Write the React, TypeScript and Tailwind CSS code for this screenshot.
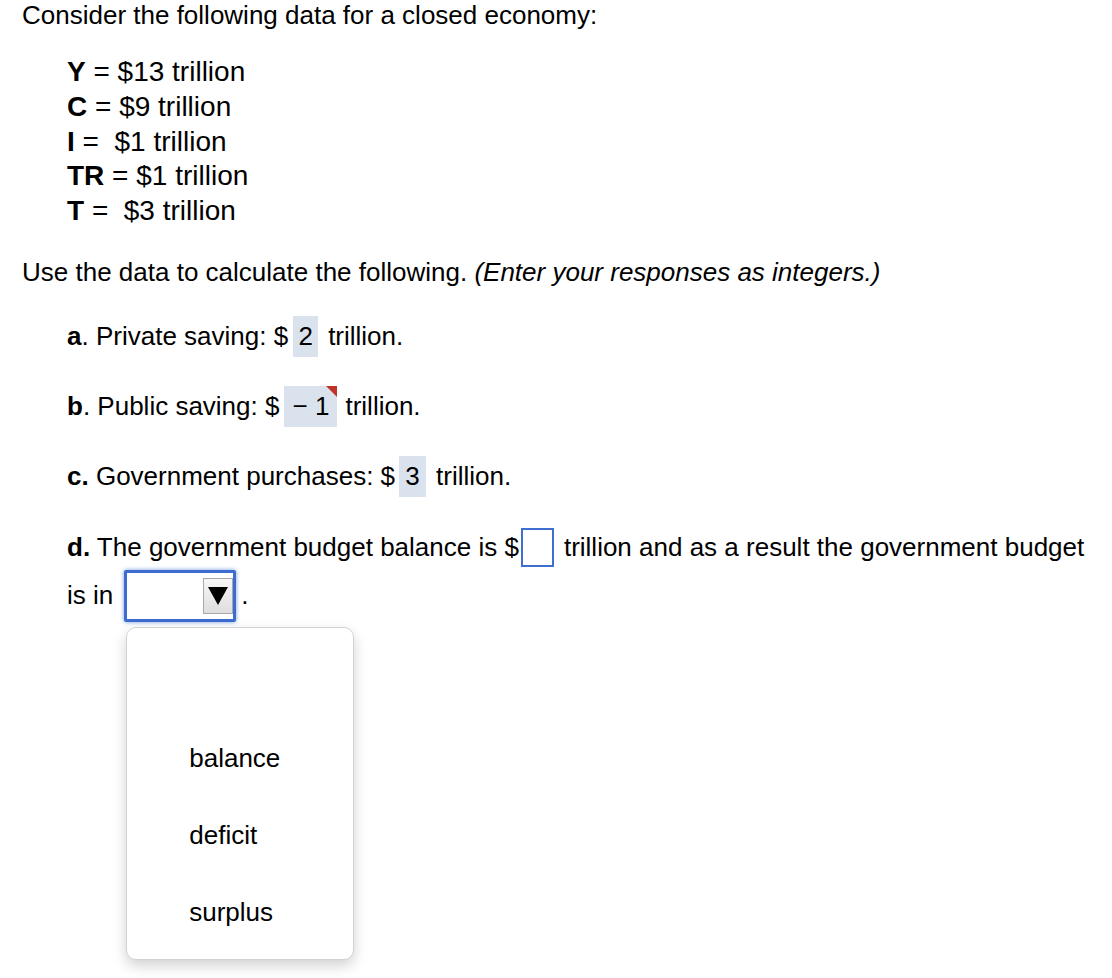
import React from "react";

function Box({ children, w, extra }: { children?: React.ReactNode; w: string; extra?: React.ReactNode }) {
  return (
    <span className={`relative flex h-[41px] items-center justify-center bg-[#dae2ee] ${w}`}>
      {children}
      {extra}
    </span>
  );
}

export default function App() {
  return (
    <div className="min-h-[978px] bg-white font-['Liberation_Sans',Arial,Helvetica,sans-serif] text-[26px] leading-[35px] text-black">
      <div className="pl-[22px]">
        <p className="leading-[31px]">Consider the following data for a closed economy:</p>

        <div className="mt-[24px] pl-[45px] text-[28px] leading-[34.75px]">
          <p>
            <b>Y</b> = $13 trillion
          </p>
          <p>
            <b>C</b> = $9 trillion
          </p>
          <p>
            <b>I</b> =&nbsp; $1 trillion
          </p>
          <p>
            <b>TR</b> = $1 trillion
          </p>
          <p>
            <b>T</b> =&nbsp; $3 trillion
          </p>
        </div>

        <p className="mt-[26px]">
          Use the data to calculate the following. <i>(Enter your responses as integers.)</i>
        </p>

        <div className="pl-[45px]">
          <div className="mt-[26px] flex h-[41px] items-center">
            <span>
              <b>a</b>. Private saving: $
            </span>
            <span className="ml-[5px]">
              <Box w="w-[25px]">2</Box>
            </span>
            <span className="ml-[10px]">trillion.</span>
          </div>

          <div className="mt-[29px] flex h-[41px] items-center">
            <span>
              <b>b</b>. Public saving: $
            </span>
            <span className="ml-[5px]">
              <Box
                w="w-[53px]"
                extra={
                  <span className="absolute right-0 top-0 h-0 w-0 border-l-[11px] border-t-[11px] border-l-transparent border-t-[#c0332b]" />
                }
              >
                <span>−&nbsp;1</span>
              </Box>
            </span>
            <span className="ml-[8px]">trillion.</span>
          </div>

          <div className="mt-[29px] flex h-[41px] items-center">
            <span>
              <b>c.</b> Government purchases: $
            </span>
            <span className="ml-[4px]">
              <Box w="w-[27px]">3</Box>
            </span>
            <span className="ml-[10px]">trillion.</span>
          </div>

          <div className="mt-[31px] flex h-[39px] items-center whitespace-nowrap">
            <span>
              <b>d.</b> The government budget balance is $
            </span>
            <span className="ml-[2px] h-[39px] w-[33px] border-2 border-[#3f6fd0] bg-white" />
            <span className="ml-[10px]">trillion and as a result the government budget</span>
          </div>

          <div className="mt-[3px] flex h-[52px] items-center">
            <span>is in</span>
            <div className="relative ml-[11px]">
              <div className="flex h-[52px] w-[112px] items-center justify-end rounded-[2px] border-[3px] border-[#3d6cd0] bg-white pr-[0px] shadow-[0_0_4px_rgba(61,108,208,0.7)]">
                <div className="flex h-[36px] w-[30px] items-center justify-center border border-[#a8a8a8] bg-gradient-to-b from-[#f7f7f7] to-[#dedede]">
                  <svg width="22" height="20" viewBox="0 0 22 20">
                    <polygon points="1,1 21,1 11,19" fill="#000" />
                  </svg>
                </div>
              </div>

              <div className="absolute left-[2px] top-[57px] z-10 flex h-[333px] w-[228px] flex-col rounded-[10px] border border-[#d2d2d2] bg-white pt-[92px] shadow-[0_6px_14px_rgba(0,0,0,0.18)]">
                <div className="flex h-[77px] items-center pl-[62px]">balance</div>
                <div className="flex h-[77px] items-center pl-[62px]">deficit</div>
                <div className="flex h-[77px] items-center pl-[62px]">surplus</div>
              </div>
            </div>
            <span className="ml-[5px]">.</span>
          </div>
        </div>
      </div>
    </div>
  );
}
